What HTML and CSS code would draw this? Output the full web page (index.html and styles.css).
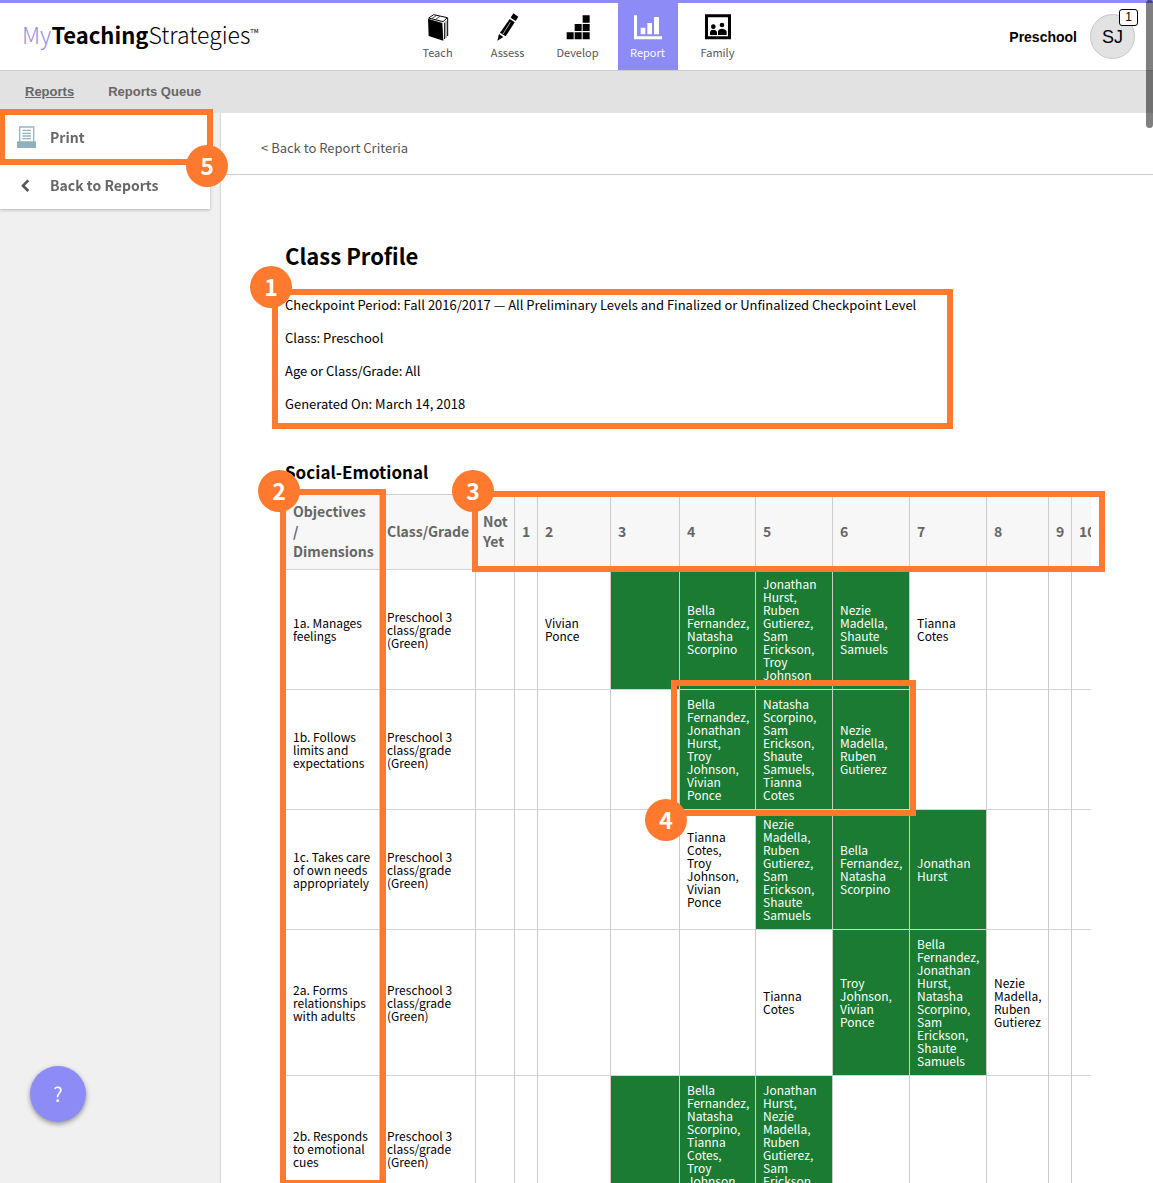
FILE: index.html
```html
<!DOCTYPE html>
<html lang="en">
<head>
<meta charset="utf-8">
<title>Class Profile - MyTeachingStrategies</title>
<link rel="stylesheet" href="styles.css">
</head>
<body>
<div class="app">
  <header class="topbar">
    <a class="logo" href="#"><span class="logo-my">My</span><span class="logo-bold">Teaching</span>Strategies<sup class="logo-tm">™</sup></a>
    <nav class="mainnav">
      <a class="nav-item" href="#">
        <svg class="nav-icon" viewBox="69 36 90 90" fill="#000" aria-hidden="true"><path d="M84 56l43 13 3 53-44-14z"/><path fill="none" stroke="#000" stroke-width="3" d="M86 54l15-10 41 9-13 12z"/><path d="M96 55l13-8M107 58l13-9" stroke="#000" stroke-width="2"/><path d="M134 68v49M143 54v54" fill="none" stroke="#000" stroke-width="3"/><path d="M138 62v52" stroke="#777" stroke-width="3"/></svg>
        <span>Teach</span></a>
      <a class="nav-item" href="#">
        <svg class="nav-icon" viewBox="279 36 90 90" fill="#000" aria-hidden="true"><path d="M340 40l15 10-8 13-15-10z"/><path d="M329 57l15 10-27 42-17-11z"/><path d="M331 67l-22 35" stroke="#fff" stroke-width="2"/><path d="M297 102l13 9-18 11z"/></svg>
        <span>Assess</span></a>
      <a class="nav-item" href="#">
        <svg class="nav-icon" viewBox="489 36 90 90" fill="#000" aria-hidden="true"><path d="M548 46h21v22h-21zM524 72h21v21h-21zM548 72h21v21h-21zM500 97h21v21h-21zM524 97h21v21h-21zM548 97h21v21h-21z"/></svg>
        <span>Develop</span></a>
      <a class="nav-item active" href="#">
        <svg class="nav-icon" viewBox="699 36 90 90" fill="#fff" aria-hidden="true"><path d="M702 46h9v63h75v9h-84zM722 83h14v20h-14zM742 69h14v34h-14zM762 51h15v52h-15z"/></svg>
        <span>Report</span></a>
      <a class="nav-item" href="#">
        <svg class="nav-icon" viewBox="909 36 90 90" fill="#000" aria-hidden="true"><path fill-rule="evenodd" d="M915 43h78v75h-78zM924 52v57h60V52z"/><circle cx="940" cy="80" r="7"/><circle cx="966" cy="75" r="7"/><path d="M930 105V96q2-7 10-7t11 7v9zM954 105V94q2-8 12-8t14 8v11z"/></svg>
        <span>Family</span></a>
    </nav>
    <div class="user">
      <span class="user-class">Preschool</span>
      <button class="avatar" type="button">SJ<span class="avatar-count">1</span></button>
    </div>
  </header>

  <nav class="subnav">
    <a class="subnav-link current" href="#">Reports</a>
    <a class="subnav-link" href="#">Reports Queue</a>
  </nav>

  <div class="columns">
    <aside class="sidebar">
      <div class="side-menu">
        <a class="side-item" href="#">
          <svg class="side-icon" viewBox="48 372 66 78" aria-hidden="true"><path fill="#fff" stroke="#94b5c1" stroke-width="4" d="M59 381h42v46H59z"/><path stroke="#94b5c1" stroke-width="4" d="M67 391h26M67 400h26M67 408h26M67 416h26"/><path fill="#8fb0bd" d="M51 424h57v20H51z"/></svg>
          <span>Print</span></a>
        <a class="side-item" href="#">
          <svg class="side-icon" viewBox="48 522 66 78" aria-hidden="true"><path fill="none" stroke="#555" stroke-width="8" d="M85 547l-16 16 16 16"/></svg>
          <span>Back to Reports</span></a>
        <div class="mark mark-print"></div>
        <span class="pin pin-5">5</span>
      </div>
    </aside>

    <main class="content">
      <div class="crumb"><a class="crumb-link" href="#">&lt; Back to Report Criteria</a></div>
      <div class="report">
        <h1 class="report-title">Class Profile</h1>
        <section class="criteria">
          <p>Checkpoint Period: Fall 2016/2017 — All Preliminary Levels and Finalized or Unfinalized Checkpoint Level</p>
          <p>Class: Preschool</p>
          <p>Age or Class/Grade: All</p>
          <p>Generated On: March 14, 2018</p>
          <div class="mark mark-criteria"></div>
          <span class="pin pin-1">1</span>
        </section>
        <h2 class="area-title">Social-Emotional</h2>
        <section class="levels">
          <div class="levels-scroll">
            <table class="levels-table">
              <colgroup>
                <col class="c-objective"><col class="c-grade"><col class="c-notyet"><col class="c-narrow"><col class="c-2"><col class="c-3"><col class="c-4"><col class="c-name"><col class="c-name"><col class="c-name"><col class="c-8"><col class="c-narrow"><col class="c-10">
              </colgroup>
              <thead>
                <tr><th>Objectives<br>/<br>Dimensions</th><th>Class/Grade</th><th>Not<br>Yet</th><th>1</th><th>2</th><th>3</th><th>4</th><th>5</th><th>6</th><th>7</th><th>8</th><th>9</th><th>10</th></tr>
              </thead>
              <tbody>
                <tr><td>1a. Manages feelings</td><td>Preschool 3 class/grade (Green)</td><td></td><td></td><td>Vivian Ponce</td><td class="band"></td><td class="band">Bella Fernandez, Natasha Scorpino</td><td class="band">Jonathan Hurst, Ruben Gutierez, Sam Erickson, Troy Johnson</td><td class="band">Nezie Madella, Shaute Samuels</td><td>Tianna Cotes</td><td></td><td></td><td></td></tr>
                <tr><td>1b. Follows limits and expectations</td><td>Preschool 3 class/grade (Green)</td><td></td><td></td><td></td><td></td><td class="band">Bella Fernandez, Jonathan Hurst,<br>Troy Johnson, Vivian Ponce</td><td class="band">Natasha Scorpino, Sam Erickson, Shaute Samuels, Tianna Cotes</td><td class="band">Nezie Madella, Ruben Gutierez</td><td></td><td></td><td></td><td></td></tr>
                <tr><td>1c. Takes care of own needs appropriately</td><td>Preschool 3 class/grade (Green)</td><td></td><td></td><td></td><td></td><td>Tianna Cotes,<br>Troy Johnson, Vivian Ponce</td><td class="band">Nezie Madella, Ruben Gutierez, Sam Erickson, Shaute Samuels</td><td class="band">Bella Fernandez, Natasha Scorpino</td><td class="band">Jonathan Hurst</td><td></td><td></td><td></td></tr>
                <tr><td>2a. Forms relationships with adults</td><td>Preschool 3 class/grade (Green)</td><td></td><td></td><td></td><td></td><td></td><td>Tianna Cotes</td><td class="band">Troy Johnson, Vivian Ponce</td><td class="band">Bella Fernandez, Jonathan Hurst, Natasha Scorpino, Sam Erickson, Shaute Samuels</td><td>Nezie Madella, Ruben Gutierez</td><td></td><td></td></tr>
                <tr><td>2b. Responds to emotional cues</td><td>Preschool 3 class/grade (Green)</td><td></td><td></td><td></td><td class="band"></td><td class="band">Bella Fernandez, Natasha Scorpino, Tianna Cotes,<br>Troy Johnson, Vivian Ponce</td><td class="band">Jonathan Hurst, Nezie Madella, Ruben Gutierez, Sam Erickson, Shaute Samuels</td><td></td><td></td><td></td><td></td><td></td></tr>
              </tbody>
            </table>
          </div>
          <div class="mark mark-objectives"></div>
          <div class="mark mark-scale"></div>
          <div class="mark mark-children"></div>
          <span class="pin pin-2">2</span>
          <span class="pin pin-3">3</span>
          <span class="pin pin-4">4</span>
        </section>
      </div>
    </main>
  </div>
</div>
<button class="help" type="button">?</button>
<div class="scroll-thumb"></div>
</body>
</html>
```

FILE: styles.css
```css
* { box-sizing: border-box; }

body {
  margin: 0;
  color: #000;
  background: #fff;
  font-family: "Noto Sans CJK SC", "Noto Sans", sans-serif;
  font-size: 13px;
  line-height: 20px;
}

a { color: inherit; text-decoration: none; }
button { font: inherit; border: 0; padding: 0; }

.app {
  display: flex;
  flex-direction: column;
  height: 100vh;
  overflow: auto;
  scrollbar-width: none;
}

/* Top bar */
.topbar {
  display: grid;
  grid-template-columns: 1fr auto 1fr;
  flex: none;
  padding: 0 18px 0 20px;
  border-top: 3px solid #8d8bf5;
  border-bottom: 1px solid #ccc;
}
.logo {
  padding: 17px 0 0 2px;
  font-size: 23px;
  font-weight: 300;
  line-height: 28px;
  white-space: nowrap;
}
.logo-my { color: #9a8fd6; }
.logo-bold { font-size: 22px; font-weight: 700; }
.logo-tm { font-size: 12px; line-height: 1; vertical-align: 6px; }

.mainnav { display: flex; gap: 10px; }
.nav-item {
  display: flex;
  flex-direction: column;
  align-items: center;
  width: 60px;
  height: 67px;
  padding-top: 9px;
  font-size: 11px;
  line-height: 20px;
  color: #555;
}
.nav-icon { width: 30px; height: 30px; }
.nav-item.active { background: #8d8bf5; color: #fff; }

.user {
  display: flex;
  justify-content: flex-end;
  align-items: center;
  gap: 13px;
  font-family: "Liberation Sans", Arial, sans-serif;
  font-size: 14px;
}
.user-class { font-weight: 700; }
.avatar {
  position: relative;
  width: 45px;
  height: 45px;
  border: 1px solid #c8c8c8;
  border-radius: 50%;
  background: #e2e2e2;
  color: #000;
  font-size: 18px;
}
.avatar-count {
  position: absolute;
  top: -6px;
  right: -4px;
  width: 19px;
  height: 17px;
  border: 1px solid #000;
  border-radius: 3px;
  background: #fff;
  font-size: 12px;
  line-height: 15px;
}

.subnav {
  display: flex;
  flex: none;
  align-items: center;
  gap: 34px;
  height: 42px;
  padding: 0 25px;
  background: #e2e2e2;
  color: #666;
  font: 700 13px/20px "Liberation Sans", Arial, sans-serif;
}
.subnav-link.current { text-decoration: underline; }

/* Sidebar */
.columns { display: flex; flex: 1 0 auto; background: #f0f0f0; }
.sidebar { position: relative; z-index: 1; flex: none; width: 221px; }
.side-menu {
  position: relative;
  width: 210px;
  background: #fff;
  box-shadow: 0 1px 3px rgba(0, 0, 0, .25);
}
.side-item {
  display: flex;
  align-items: center;
  gap: 12px;
  height: 48px;
  padding-left: 16px;
  color: #666;
  font-size: 14px;
  font-weight: 700;
}
.side-icon { width: 22px; height: 26px; }

/* Report */
.content {
  flex: 1;
  min-width: 0;
  background: #fff;
  box-shadow: 0 0 2px rgba(0, 0, 0, .3);
  clip-path: inset(0 0 0 -4px);
}
.crumb {
  padding: 25px 40px 16px;
  border-bottom: 1px solid #ccc;
  color: #555;
}
.report { padding: 63px 62px 0 64px; }
.report-title { margin: 0 0 23px; font-size: 22px; line-height: 34px; }
.criteria { position: relative; display: flex; flex-direction: column; gap: 13px; }
.criteria p { margin: 0; }
.area-title { margin: 45px 0 9px; font-size: 17px; line-height: 26px; }

.levels { position: relative; }
.levels-scroll { overflow: hidden; }
.levels-table {
  width: 817px;
  table-layout: fixed;
  border-spacing: 0;
  border-top: 1px solid #ccc;
}
.c-objective { width: 95px; }
.c-grade { width: 96px; }
.c-notyet { width: 39px; }
.c-narrow { width: 23px; }
.c-2 { width: 73px; }
.c-3 { width: 69px; }
.c-4 { width: 76px; }
.c-name { width: 77px; }
.c-8 { width: 62px; }
.c-10 { width: 30px; }
.levels-table th,
.levels-table td {
  padding: 7px 7px 8px;
  border-right: 1px solid #ccc;
  border-bottom: 1px solid #d4d4d4;
  text-align: left;
  vertical-align: middle;
}
.levels-table th {
  padding: 6px 0 8px 7px;
  background: #f7f7f7;
  color: #666;
  font-size: 14px;
  line-height: 20px;
}
.levels-table td { font-size: 12px; line-height: 13px; }
.levels-table tr > :first-child { padding-left: 8px; padding-right: 4px; }
.levels-table .band { background: #1b7b32; color: #fff; }

/* Callouts drawn over the page */
.mark { position: absolute; border: 6px solid #ff7a2e; pointer-events: none; }
.pin {
  position: absolute;
  width: 42px;
  height: 42px;
  border-radius: 50%;
  background: #ff7a2e;
  color: #fff;
  font-size: 23px;
  font-weight: 700;
  line-height: 40px;
  text-align: center;
}
.mark-print { top: -4px; left: -1px; width: 214px; height: 56px; }
.pin-5 { top: 32px; left: 186px; }
.mark-criteria { top: -6px; left: -13px; width: 681px; height: 140px; }
.pin-1 { top: -29px; left: -35px; }
.mark-objectives { top: -5px; left: -5px; width: 106px; height: 697px; }
.mark-scale { top: -3px; left: 187px; right: -14px; height: 81px; }
.mark-children { top: 186px; left: 386px; width: 245px; height: 136px; }
.pin-2 { top: -24px; left: -27px; }
.pin-3 { top: -24px; left: 167px; }
.pin-4 { top: 305px; left: 360px; }

.help {
  position: fixed;
  left: 30px;
  bottom: 61px;
  width: 56px;
  height: 56px;
  border-radius: 50%;
  background: #8d8bf5;
  color: #fff;
  font-size: 20px;
  box-shadow: 0 2px 5px rgba(0, 0, 0, .4);
}
.scroll-thumb {
  position: fixed;
  top: 0;
  right: 0;
  width: 7px;
  height: 128px;
  border-radius: 4px;
  background: rgba(0, 0, 0, .5);
}
```
